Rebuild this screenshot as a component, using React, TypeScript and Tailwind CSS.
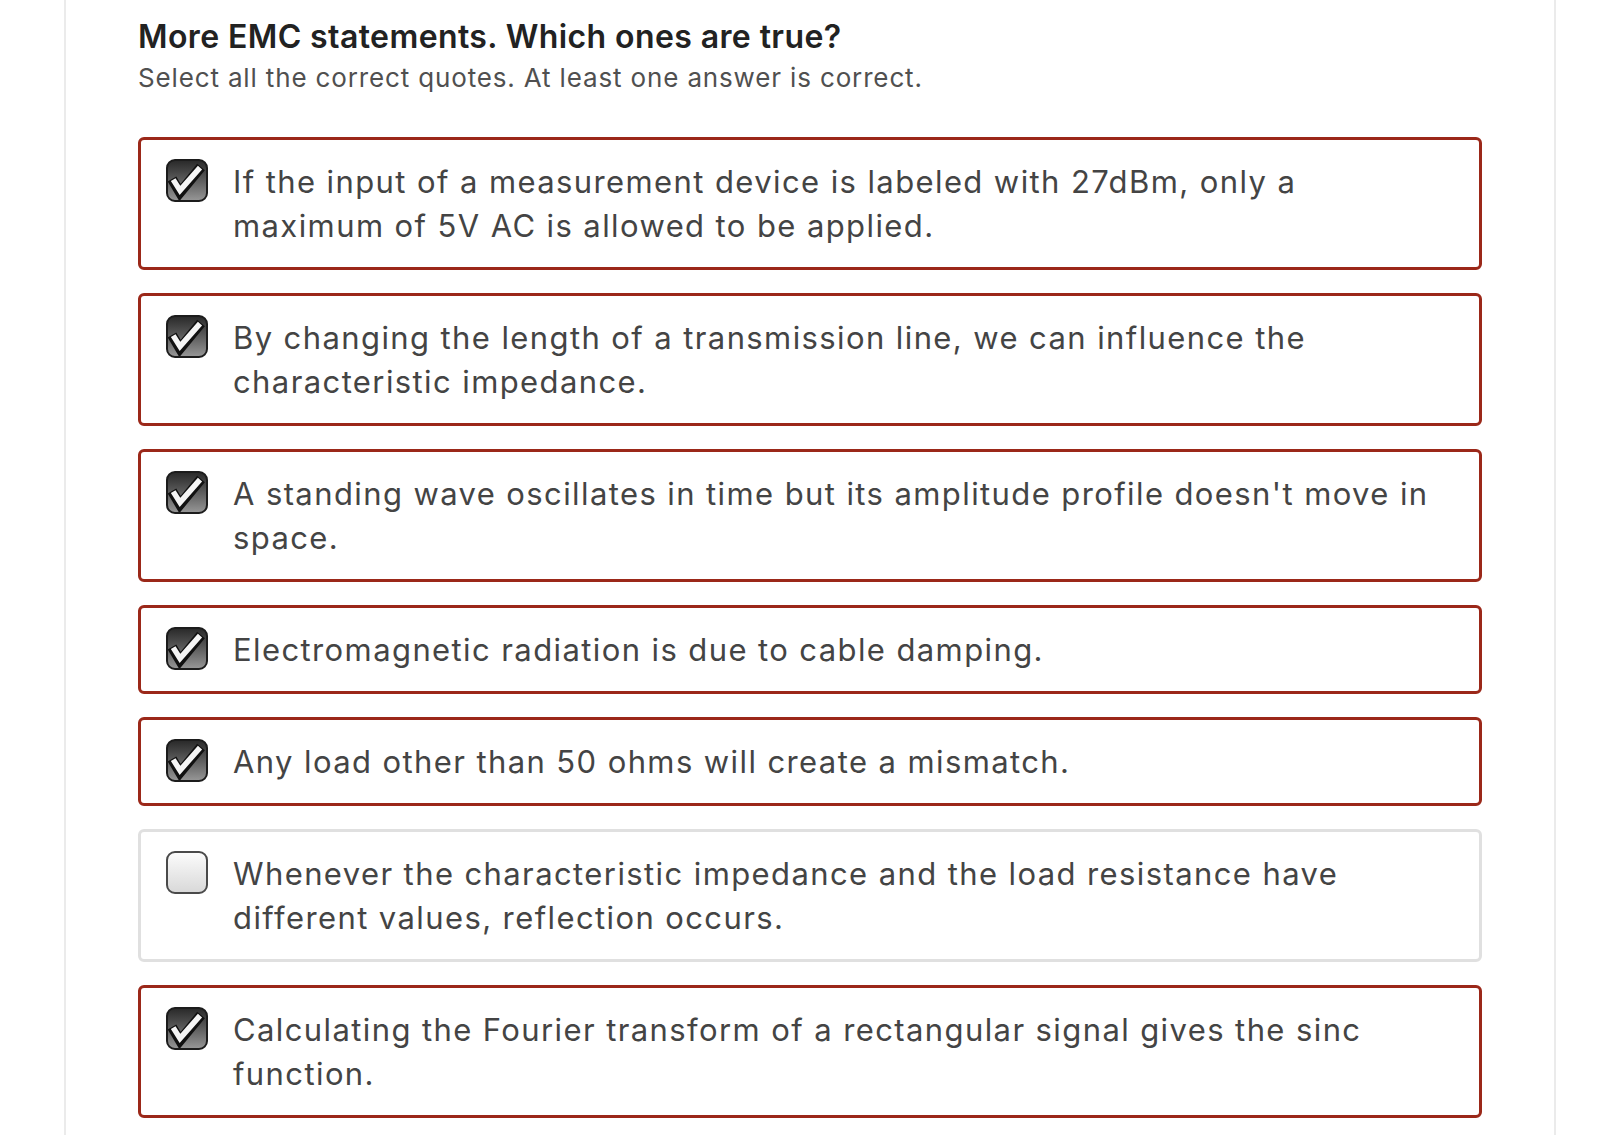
import React from "react";

type Item = { lines: string[]; checked: boolean };

const items: Item[] = [
  {
    lines: [
      "If the input of a measurement device is labeled with 27dBm, only a",
      "maximum of 5V AC is allowed to be applied.",
    ],
    checked: true,
  },
  {
    lines: [
      "By changing the length of a transmission line, we can influence the",
      "characteristic impedance.",
    ],
    checked: true,
  },
  {
    lines: [
      "A standing wave oscillates in time but its amplitude profile doesn't move in",
      "space.",
    ],
    checked: true,
  },
  { lines: ["Electromagnetic radiation is due to cable damping."], checked: true },
  { lines: ["Any load other than 50 ohms will create a mismatch."], checked: true },
  {
    lines: [
      "Whenever the characteristic impedance and the load resistance have",
      "different values, reflection occurs.",
    ],
    checked: false,
  },
  {
    lines: [
      "Calculating the Fourier transform of a rectangular signal gives the sinc",
      "function.",
    ],
    checked: true,
  },
];

function CheckBox({ checked }: { checked: boolean }) {
  if (!checked) {
    return (
      <div className="w-[42px] h-[43px] shrink-0 -mt-[1px] -ml-[1px] rounded-[9px] border-2 border-[#4a4a4a] bg-gradient-to-b from-[#fbfbfb] to-[#d9d9d9]" />
    );
  }
  return (
    <div className="relative w-[42px] h-[43px] shrink-0 -mt-[1px] -ml-[1px] rounded-[9px] border-2 border-[#1c1c1c] bg-gradient-to-b from-[#2b2b2b] to-[#959595] overflow-hidden">
      <svg
        className="absolute inset-0"
        width="38"
        height="39"
        viewBox="0 0 38 39"
      >
        <path
          d="M4 18 L12 31.5 L33 6"
          fill="none"
          stroke="#111"
          strokeWidth="10"
          strokeLinejoin="miter"
          strokeLinecap="butt"
        />
        <path
          d="M5.2 18.6 L12 29.4 L32 6.6"
          fill="none"
          stroke="#f5f5f5"
          strokeWidth="5.5"
          strokeLinejoin="miter"
          strokeLinecap="butt"
        />
      </svg>
    </div>
  );
}

export default function App() {
  return (
    <div className="min-h-[1135px] bg-white font-['Inter','Liberation_Sans',sans-serif]">
      <div className="ml-[64px] w-[1492px] min-h-[1135px] border-x-2 border-[#ebebeb] px-[72px] pt-[17px] pb-[20px]">
        <h1 className="text-[32px] leading-[40px] font-semibold text-[#222222] tracking-[0.4px]">
          More EMC statements. Which ones are true?
        </h1>
        <p className="mt-[5px] text-[26px] leading-[32px] text-[#505050] tracking-[0.85px]">
          Select all the correct quotes. At least one answer is correct.
        </p>
        <div className="mt-[43px] flex flex-col gap-[23px]">
          {items.map((it, i) => (
            <div
              key={i}
              className={
                it.checked
                  ? "flex items-start gap-[25px] rounded-[6px] border-[3px] border-[#9b2819] pt-[20px] pb-[19px] pl-[26px] pr-[20px]"
                  : "flex items-start gap-[25px] rounded-[6px] border-[3px] border-[#e0e0e0] pt-[20px] pb-[19px] pl-[26px] pr-[20px]"
              }
            >
              <CheckBox checked={it.checked} />
              <div className="text-[31px] leading-[44px] text-[#444444] tracking-[1.4px]">
                {it.lines.map((l, j) => (
                  <div key={j} className="whitespace-nowrap">
                    {l}
                  </div>
                ))}
              </div>
            </div>
          ))}
        </div>
      </div>
    </div>
  );
}
